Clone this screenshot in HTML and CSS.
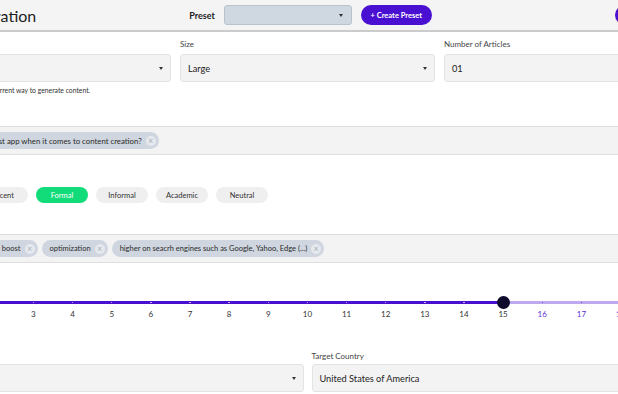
FILE: index.html
```html
<!DOCTYPE html>
<html lang="en">
<head>
  <meta charset="UTF-8">
  <meta name="viewport" content="width=device-width, initial-scale=1.0">
  <title>Article Generation</title>
  <link rel="stylesheet" href="styles.css">
</head>
<body>
  <div class="page">
    <header class="topbar">
      <h1 class="title">Article Generation</h1>
      <div class="preset">
        <span class="preset-label">Preset</span>
        <div class="preset-select"><span class="caret"></span></div>
        <button class="btn-create">+ Create Preset</button>
      </div>
      <div class="user">
        <span class="avatar"></span>
        <span class="user-name">Account</span>
      </div>
    </header>

    <main class="content">
      <div class="row row-3">
        <div class="field">
          <label>Type</label>
          <div class="input">Article<span class="caret"></span></div>
        </div>
        <div class="field">
          <label>Size</label>
          <div class="input">Large<span class="caret"></span></div>
        </div>
        <div class="field">
          <label>Number of Articles</label>
          <div class="input">01</div>
        </div>
      </div>
      <p class="hint">Pick the fastest and most current way to generate content.</p>

      <section class="section">
        <label>Topic</label>
        <div class="chip-box">
          <span class="chip chip-lg">What will be the best app when it comes to content creation?<span class="chip-x">&times;</span></span>
        </div>
      </section>

      <section class="section">
        <label>Tone</label>
        <div class="tones">
          <button class="tone">Friendly</button>
          <button class="tone">Decent</button>
          <button class="tone active">Formal</button>
          <button class="tone">Informal</button>
          <button class="tone">Academic</button>
          <button class="tone">Neutral</button>
        </div>
      </section>

      <section class="section section-kw">
        <label>Keywords</label>
        <div class="chip-box">
          <span class="chip">search ranks<span class="chip-x">&times;</span></span>
          <span class="chip">boost<span class="chip-x">&times;</span></span>
          <span class="chip">optimization<span class="chip-x">&times;</span></span>
          <span class="chip">higher on seacrh engines such as Google, Yahoo, Edge (...)<span class="chip-x">&times;</span></span>
        </div>
      </section>

      <section class="section">
        <label>Paragraphs</label>
        <div class="slider">
          <div class="track">
            <div class="dots" id="dots"></div>
            <span class="thumb"></span>
          </div>
          <div class="scale" id="scale"></div>
        </div>
      </section>

      <div class="row row-2 section-last">
        <div class="field">
          <label>Language</label>
          <div class="input">English<span class="caret"></span></div>
        </div>
        <div class="field">
          <label>Target Country</label>
          <div class="input">United States of America</div>
        </div>
      </div>
    </main>
  </div>

  <script>
    const value = 15;
    const max = 20;
    const dots = document.getElementById("dots");
    const scale = document.getElementById("scale");
    for (let i = 0; i <= max; i++) {
      const dot = document.createElement("span");
      dot.className = i > value ? "dot light" : "dot";
      dots.appendChild(dot);

      const tick = document.createElement("span");
      tick.className = i > value ? "tick after" : "tick";
      tick.innerText = i;
      scale.appendChild(tick);
    }
  </script>
</body>
</html>
```

FILE: styles.css
```css
body {
  margin: 0;
  background: #fff;
  color: #222;
  font-family: 'Lato', 'Liberation Sans', sans-serif;
  overflow: hidden;
}
.page {
  width: 783px;
  margin-left: -84px;
}
.topbar {
  display: grid;
  grid-template-columns: 1fr auto 1fr;
  align-items: center;
  height: 30px;
  background: #f4f4f4;
  border-bottom: 2px solid #cbcbcb;
}
.title {
  margin: 0 0 0 -9px;
  font-size: 16px;
  font-weight: 400;
  color: #1d1d1d;
}
.preset {
  display: flex;
  align-items: center;
  gap: 9px;
  margin-left: 6px;
}
.preset-label {
  font-size: 9px;
  font-weight: 700;
}
.preset-select {
  width: 128px;
  height: 20px;
  box-sizing: border-box;
  background: #cfd7e1;
  border: 1px solid #b9c3ce;
  border-radius: 3px;
  display: flex;
  align-items: center;
  justify-content: flex-end;
  padding-right: 8px;
}
.btn-create {
  height: 20px;
  width: 71px;
  padding: 0;
  border: none;
  border-radius: 10px;
  background: #4a10d2;
  color: #fff;
  font-family: inherit;
  font-size: 7.5px;
  font-weight: 700;
}
.user {
  display: flex;
  align-items: center;
  justify-content: flex-end;
  gap: 6px;
  padding-right: 20px;
}
.avatar {
  width: 20px;
  height: 20px;
  border-radius: 50%;
  background: #4a10d2;
}
.user-name {
  font-size: 9px;
  width: 38px;
}
.caret {
  width: 0;
  height: 0;
  border-left: 2.5px solid transparent;
  border-right: 2.5px solid transparent;
  border-top: 3px solid #333;
}
.content {
  padding-top: 7px;
}
.row {
  display: grid;
  gap: 9px;
}
.row-3 {
  grid-template-columns: repeat(3, 1fr);
}
.row-2 {
  grid-template-columns: repeat(2, 1fr);
  gap: 8px;
}
label {
  display: block;
  font-size: 8px;
  line-height: 10px;
  color: #444;
  margin-bottom: 5px;
}
.input {
  height: 28px;
  box-sizing: border-box;
  background: #f3f3f3;
  border: 1px solid #e3e3e3;
  border-radius: 3px;
  display: flex;
  align-items: center;
  justify-content: space-between;
  padding: 0 7px;
  font-size: 9.2px;
  color: #222;
}
.hint {
  margin: 4px 0 0;
  font-size: 6.8px;
  line-height: 8px;
  color: #333;
}
.section {
  margin-top: 17px;
}
.section-kw {
  margin-top: 16px;
}
.section-last {
  margin-top: 32px;
}
.section-last label {
  margin-bottom: 3px;
}
.chip-box {
  height: 29px;
  box-sizing: border-box;
  background: #f3f3f3;
  border-top: 1px solid #dedede;
  border-bottom: 1px solid #dedede;
  display: flex;
  align-items: center;
  gap: 4px;
  padding: 0 8px;
  white-space: nowrap;
}
.chip {
  display: flex;
  align-items: center;
  gap: 4px;
  height: 17px;
  padding: 0 3px 0 8px;
  border-radius: 9px;
  background: #cfd6df;
  font-size: 7.5px;
  color: #2a2a2a;
}
.chip-lg {
  font-size: 7.8px;
}
.chip-x {
  width: 10px;
  height: 10px;
  border-radius: 50%;
  background: #e6eaef;
  color: #a9b1bb;
  font-size: 9px;
  line-height: 10px;
  text-align: center;
}
.tones {
  display: flex;
  gap: 8px;
}
.tone {
  width: 52px;
  height: 16px;
  padding: 0;
  border: none;
  border-radius: 8px;
  background: #efefef;
  color: #333;
  font-family: inherit;
  font-size: 7.5px;
}
.tone.active {
  background: #12dc7a;
  color: #fff;
}
.slider {
  padding-top: 1px;
}
.track {
  position: relative;
  height: 3px;
  margin: 5px 0;
  background: linear-gradient(to right, #4a10d2 75%, #bca9ee 75%);
}
.dots {
  height: 3px;
  display: flex;
  justify-content: space-between;
  align-items: center;
}
.dot {
  width: 0;
  min-width: 0;
  display: flex;
  justify-content: center;
}
.dot::before {
  content: "";
  flex: none;
  width: 1.5px;
  height: 1.5px;
  border-radius: 50%;
  background: #d9cdfb;
}
.dot.light::before {
  background: #5a2fd4;
}
.thumb {
  position: absolute;
  left: 75%;
  top: 50%;
  width: 13px;
  height: 13px;
  margin: -6.5px 0 0 -6.5px;
  border-radius: 50%;
  background: #0e0b2c;
}
.scale {
  display: flex;
  justify-content: space-between;
  margin-top: 5px;
}
.tick {
  width: 0;
  min-width: 0;
  display: flex;
  justify-content: center;
  font-size: 8px;
  line-height: 10px;
  color: #333;
}
.tick.after {
  color: #5a2fd4;
}
```
